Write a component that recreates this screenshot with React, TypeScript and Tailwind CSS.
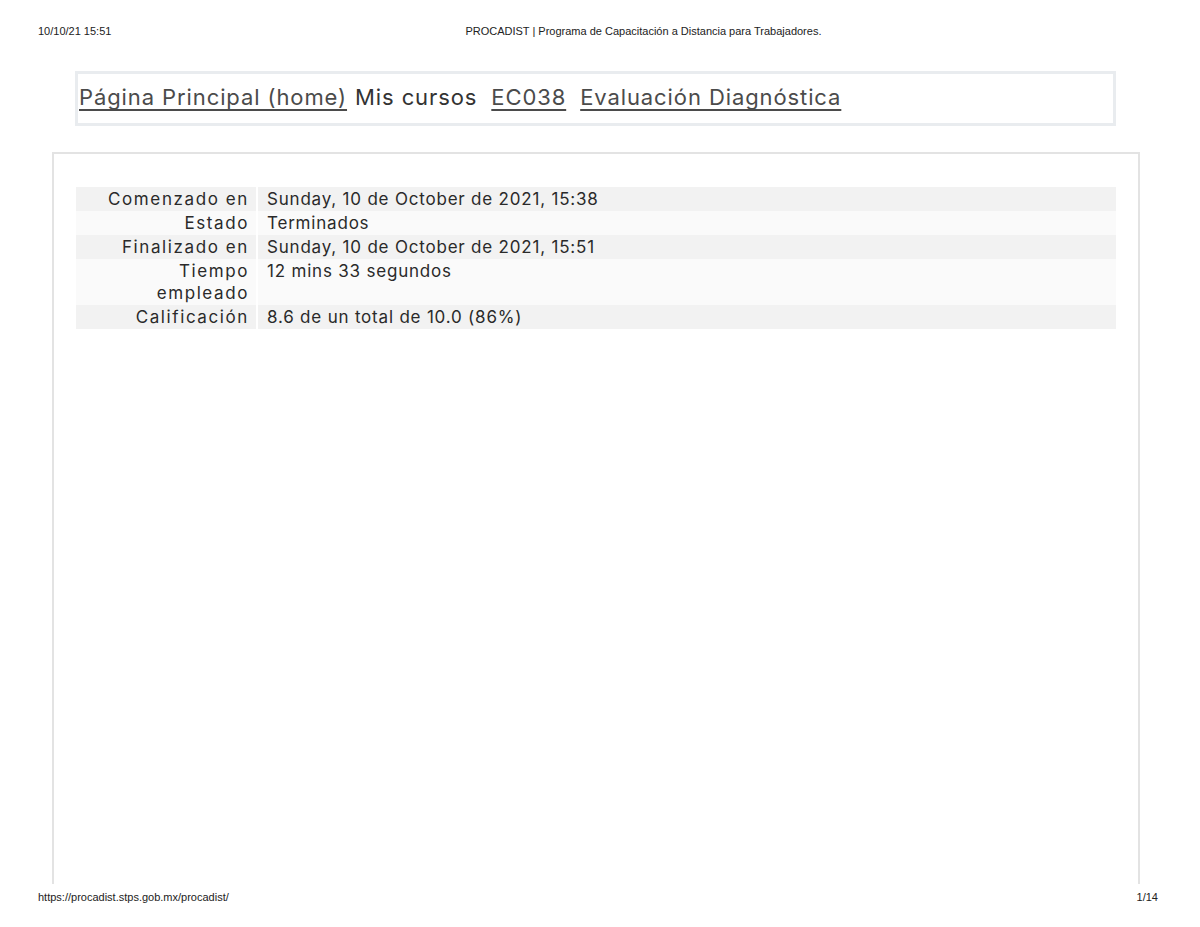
const rows: { label: string[]; value: string }[] = [
  { label: ['Comenzado en'], value: 'Sunday, 10 de October de 2021, 15:38' },
  { label: ['Estado'], value: 'Terminados' },
  { label: ['Finalizado en'], value: 'Sunday, 10 de October de 2021, 15:51' },
  { label: ['Tiempo', 'empleado'], value: '12 mins 33 segundos' },
  { label: ['Calificación'], value: '8.6 de un total de 10.0 (86%)' },
]

const link =
  'text-[#4b4b4b] underline decoration-[1.5px] underline-offset-[4px] [text-decoration-skip-ink:none]'

export default function App() {
  return (
    <div className="relative h-[927px] w-[1200px] overflow-hidden bg-white">
      {/* cabecera de impresión */}
      <div className="flex h-[48px] items-start pt-[23px] font-['Liberation_Sans',Arial,sans-serif] text-[11px] text-[#222]">
        <span className="pl-[38px]">10/10/21 15:51</span>
        <span className="ml-[354px]">
          PROCADIST | Programa de Capacitación a Distancia para Trabajadores.
        </span>
      </div>

      <div className="font-['Inter','Open_Sans',sans-serif]">
        {/* breadcrumb */}
        <div className="ml-[75px] mt-[23px] flex h-[55px] w-[1041px] items-center border-[3px] border-[#e9ecef] px-[1px] pb-[3px] text-[22px] tracking-[0.9px] text-[#333]">
          <a className={link}>Página Principal (home)</a>
          <span className="ml-[8px]">Mis cursos</span>
          <a className={`ml-[14px] ${link}`}>EC038</a>
          <a className={`ml-[14px] ${link}`}>Evaluación Diagnóstica</a>
        </div>

        {/* panel principal */}
        <div className="ml-[52px] mt-[26px] h-[732px] w-[1088px] border-x-2 border-t-2 border-[#e3e3e3] px-[22px] pt-[33px]">
          <table className="w-[1040px] border-collapse text-[17px] leading-[22px] tracking-[0.8px] text-[#2a2a2a]">
            <tbody>
              {rows.map((r, i) => (
                <tr key={i} className={i % 2 === 0 ? 'bg-[#f2f2f2]' : 'bg-[#fafafa]'}>
                  <td className="w-[181px] border-r-2 border-white py-[1px] pr-[7px] text-right align-top tracking-[1.6px]">
                    {r.label.map((l) => (
                      <div key={l}>{l}</div>
                    ))}
                  </td>
                  <td className="py-[1px] pl-[9px] align-top">{r.value}</td>
                </tr>
              ))}
            </tbody>
          </table>
        </div>
      </div>

      {/* pie de impresión */}
      <div className="absolute left-0 right-0 top-[889px] flex justify-between px-[38px] font-['Liberation_Sans',Arial,sans-serif] text-[11px] text-[#222]">
        <span>https://procadist.stps.gob.mx/procadist/</span>
        <span className="pr-[4px]">1/14</span>
      </div>
    </div>
  )
}
